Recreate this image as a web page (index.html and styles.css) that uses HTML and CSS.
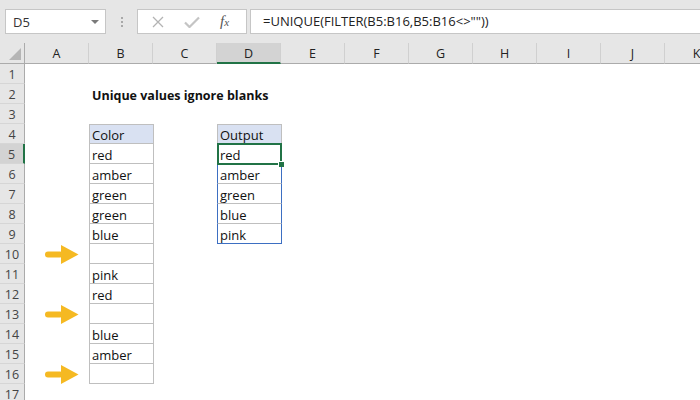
FILE: index.html
```html
<!DOCTYPE html>
<html>
<head>
<meta charset="utf-8">
<link rel="stylesheet" href="styles.css">
</head>
<body>
<div class="app">
  <div class="fbar">
    <div class="namebox"><span>D5</span><span class="caret"></span></div>
    <div class="grip"><i></i><i></i><i></i></div>
    <div class="fbtns">
      <svg class="ico-x" width="12" height="12" viewBox="0 0 12 12"><path d="M1 1L11 11M11 1L1 11" stroke="#b3b3b3" stroke-width="1.3" fill="none"/></svg>
      <svg class="ico-ok" width="16" height="12" viewBox="0 0 16 12"><path d="M1 6.5L5.5 11L15 1.5" stroke="#c4c4c4" stroke-width="2.2" fill="none"/></svg>
      <span class="fx"><i>f</i><i class="x">x</i></span>
    </div>
    <div class="finput">=UNIQUE(FILTER(B5:B16,B5:B16&lt;&gt;""))</div>
  </div>
  <div class="sheet">
    <div class="corner"><svg width="12" height="12" viewBox="0 0 12 12"><polygon points="12,0 12,12 0,12" fill="#b5b5b5"/></svg></div>
    <div class="ch">A</div>
    <div class="ch">B</div>
    <div class="ch">C</div>
    <div class="ch on">D</div>
    <div class="ch">E</div>
    <div class="ch">F</div>
    <div class="ch">G</div>
    <div class="ch">H</div>
    <div class="ch">I</div>
    <div class="ch">J</div>
    <div class="ch">K</div>

    <div class="rows">
      <div class="rh">1</div>
      <div class="rh">2</div>
      <div class="rh">3</div>
      <div class="rh">4</div>
      <div class="rh on">5</div>
      <div class="rh">6</div>
      <div class="rh">7</div>
      <div class="rh">8</div>
      <div class="rh">9</div>
      <div class="rh">10</div>
      <div class="rh">11</div>
      <div class="rh">12</div>
      <div class="rh">13</div>
      <div class="rh">14</div>
      <div class="rh">15</div>
      <div class="rh">16</div>
      <div class="rh">17</div>
    </div>

    <div class="title">Unique values ignore blanks</div>

    <div class="tbl tblB">
      <div class="c hd">Color</div>
      <div class="c">red</div>
      <div class="c">amber</div>
      <div class="c">green</div>
      <div class="c">green</div>
      <div class="c">blue</div>
      <div class="c"></div>
      <div class="c">pink</div>
      <div class="c">red</div>
      <div class="c"></div>
      <div class="c">blue</div>
      <div class="c">amber</div>
      <div class="c"></div>
    </div>

    <div class="tbl tblD">
      <div class="c hd">Output</div>
      <div class="c sp sel">red</div>
      <div class="c sp">amber</div>
      <div class="c sp">green</div>
      <div class="c sp">blue</div>
      <div class="c sp last">pink</div>
    </div>

    <svg class="arrow r10" width="34" height="19" viewBox="0 0 34 19"><rect x="0" y="6.5" width="18" height="6" rx="3" fill="#f5b922"/><polygon points="16,0 33.5,9.5 16,19" fill="#f5b922"/></svg>
    <svg class="arrow r13" width="34" height="19" viewBox="0 0 34 19"><rect x="0" y="6.5" width="18" height="6" rx="3" fill="#f5b922"/><polygon points="16,0 33.5,9.5 16,19" fill="#f5b922"/></svg>
    <svg class="arrow r16" width="34" height="19" viewBox="0 0 34 19"><rect x="0" y="6.5" width="18" height="6" rx="3" fill="#f5b922"/><polygon points="16,0 33.5,9.5 16,19" fill="#f5b922"/></svg>
  </div>
</div>
</body>
</html>
```

FILE: styles.css
```css
html, body {
  margin: 0;
  padding: 0;
  background: #ffffff;
}
body {
  font-family: "Open Sans", "Noto Sans", sans-serif;
  color: #111;
}
.app {
  width: 700px;
  height: 400px;
  overflow: hidden;
}

/* formula bar */
.fbar {
  height: 43px;
  box-sizing: border-box;
  background: #e6e6e6;
  display: flex;
  align-items: flex-start;
  padding: 9px 0 0 5px;
}
.namebox {
  width: 101px;
  height: 25px;
  flex: none;
  box-sizing: border-box;
  border: 1px solid #c6c6c6;
  background: #fff;
  display: flex;
  align-items: center;
  justify-content: space-between;
  padding: 0 6px 0 7px;
  font-size: 13px;
  color: #333;
}
.caret {
  width: 0;
  height: 0;
  border-left: 4px solid transparent;
  border-right: 4px solid transparent;
  border-top: 4px solid #7a7a7a;
}
.grip {
  width: 31px;
  height: 25px;
  flex: none;
  box-sizing: border-box;
  display: flex;
  flex-direction: column;
  align-items: center;
  gap: 2px;
  padding-top: 8px;
}
.grip i {
  display: block;
  width: 2px;
  height: 2px;
  background: #a8a8a8;
}
.fbtns {
  width: 110px;
  height: 25px;
  flex: none;
  box-sizing: border-box;
  border: 1px solid #c6c6c6;
  background: #fff;
  display: flex;
  align-items: center;
}
.ico-x {
  margin-left: 14px;
}
.ico-ok {
  margin-left: 20px;
}
.fx {
  margin-left: 20px;
  font-family: "Liberation Serif", serif;
  font-size: 15px;
  color: #555;
  line-height: 1;
}
.fx .x {
  font-size: 11px;
}
.finput {
  margin-left: 3px;
  flex: 1;
  height: 25px;
  box-sizing: border-box;
  border: 1px solid #c6c6c6;
  border-right: none;
  background: #fff;
  padding-left: 12px;
  font-size: 13px;
  line-height: 23px;
  color: #222;
  white-space: nowrap;
}

/* sheet */
.sheet {
  display: grid;
  grid-template-columns: 25px repeat(11, 64px);
  grid-template-rows: 21px repeat(17, 20px);
}
.corner {
  background: #e6e6e6;
  border-right: 1px solid #ababab;
  border-bottom: 1px solid #ababab;
  box-sizing: border-box;
  display: flex;
  justify-content: flex-end;
  align-items: flex-end;
  padding: 0 3px 3px 0;
}
.ch {
  background: #e6e6e6;
  border-right: 1px solid #d0d0d0;
  border-bottom: 1px solid #ababab;
  box-sizing: border-box;
  display: flex;
  align-items: center;
  justify-content: center;
  padding-top: 1px;
  font-size: 12.5px;
  color: #222;
}
.ch.on {
  background: #d3d3d3;
  border-bottom: 2px solid #217346;
}
.rows {
  grid-column: 1;
  grid-row: 2 / span 17;
  display: flex;
  flex-direction: column;
}
.rh {
  flex: none;
  height: 20px;
  box-sizing: border-box;
  background: #e6e6e6;
  border-right: 1px solid #ababab;
  border-bottom: 1px solid #d6d6d6;
  display: flex;
  align-items: center;
  justify-content: center;
  padding-top: 2px;
  font-size: 12.5px;
  color: #444;
}
.rh.on {
  background: #d3d3d3;
  border-right: 2px solid #217346;
}

.title {
  grid-column: 3 / span 5;
  grid-row: 3;
  display: flex;
  align-items: center;
  padding: 2px 0 0 3px;
  font-weight: bold;
  font-size: 12.5px;
  white-space: nowrap;
  color: #111;
}

.tbl {
  width: 65px;
  align-self: start;
  display: flex;
  flex-direction: column;
  border-top: 1px solid #bfbfbf;
}
.tblB {
  grid-column: 3;
  grid-row: 5 / span 13;
}
.tblD {
  grid-column: 5;
  grid-row: 5 / span 6;
}
.c {
  flex: none;
  height: 20px;
  box-sizing: border-box;
  border: 1px solid #bfbfbf;
  border-top: none;
  padding: 2px 0 0 2px;
  display: flex;
  align-items: center;
  font-size: 13px;
  color: #111;
}
.c:first-child {
  height: 19px;
  padding-top: 1px;
}
.hd {
  background: #d9e1f2;
}
.c.sp {
  border-left-color: #3d6fc2;
  border-right-color: #3d6fc2;
}
.c.last {
  border-bottom-color: #3d6fc2;
}
.sel {
  position: relative;
}
.sel::before {
  content: "";
  position: absolute;
  left: -1px;
  top: -1px;
  right: -1px;
  bottom: -2px;
  border: 2px solid #217346;
}
.sel::after {
  content: "";
  position: absolute;
  right: -3px;
  bottom: -4px;
  width: 5px;
  height: 5px;
  background: #217346;
  border-left: 1px solid #fff;
  border-top: 1px solid #fff;
}

.arrow {
  grid-column: 2;
  justify-self: end;
  align-self: center;
  margin-right: 10px;
}
.r10 { grid-row: 11; }
.r13 { grid-row: 14; }
.r16 { grid-row: 17; }
```
